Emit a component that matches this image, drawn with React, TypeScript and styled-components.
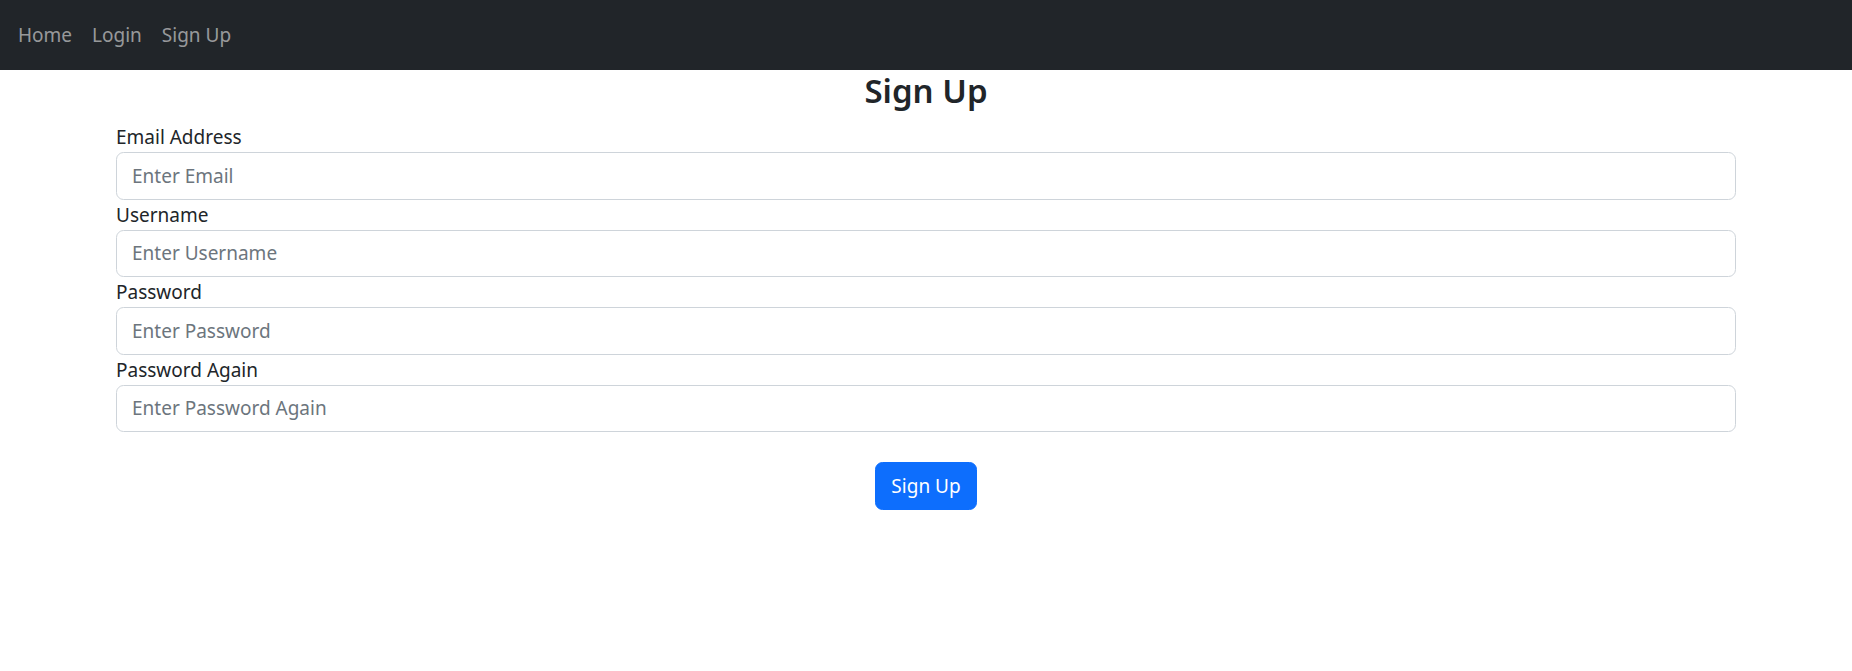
import styled, { createGlobalStyle } from 'styled-components';

const GlobalStyle = createGlobalStyle`
	* {
		box-sizing: border-box;
	}

	body {
		margin: 0;
		background: #ffffff;
		color: #212529;
		font-family: 'Noto Sans', 'Open Sans', sans-serif;
		font-size: 19px;
		line-height: 30px;
	}
`;

const fields = [
	{ label: 'Email Address', placeholder: 'Enter Email', type: 'email' },
	{ label: 'Username', placeholder: 'Enter Username', type: 'text' },
	{ label: 'Password', placeholder: 'Enter Password', type: 'password' },
	{ label: 'Password Again', placeholder: 'Enter Password Again', type: 'password' },
];

const App = () => {
	return (
		<>
			<GlobalStyle />
			<NavBar>
				<NavLink href="#">Home</NavLink>
				<NavLink href="#">Login</NavLink>
				<NavLink href="#">Sign Up</NavLink>
			</NavBar>
			<Container>
				<Title>Sign Up</Title>
				<form onSubmit={(e) => e.preventDefault()}>
					{fields.map((f) => (
						<FieldGroup key={f.label}>
							<Label>{f.label}</Label>
							<Input type={f.type} placeholder={f.placeholder} />
						</FieldGroup>
					))}
					<ButtonRow>
						<SubmitButton type="submit">Sign Up</SubmitButton>
					</ButtonRow>
				</form>
			</Container>
		</>
	);
};

export default App;

const NavBar = styled.nav`
	height: 70px;
	background-color: #212529;
	display: flex;
	align-items: center;
	padding: 0 8px;
`;

const NavLink = styled.a`
	padding: 10px;
	color: rgba(255, 255, 255, 0.55);
	text-decoration: none;
	font-size: 19px;
	line-height: 30px;
`;

const Container = styled.div`
	width: 100%;
	max-width: 1650px;
	margin: 0 auto;
	padding: 0 15px;
`;

const Title = styled.h3`
	margin: 0 0 10px;
	text-align: center;
	font-size: 33px;
	line-height: 42px;
	font-weight: 600;
`;

const FieldGroup = styled.div`
	display: flex;
	flex-direction: column;
`;

const Label = styled.label`
	font-size: 19px;
	line-height: 30px;
	color: #212529;
`;

const Input = styled.input`
	height: 47.5px;
	width: 100%;
	padding: 7.5px 15px;
	font-family: inherit;
	font-size: 19px;
	color: #212529;
	border: 1px solid #ced4da;
	border-radius: 7.5px;
	outline: none;

	&::placeholder {
		color: #6c757d;
	}
`;

const ButtonRow = styled.div`
	display: flex;
	justify-content: center;
	margin-top: 30px;
`;

const SubmitButton = styled.button`
	height: 47.5px;
	padding: 0 15px;
	background-color: #0d6efd;
	color: #ffffff;
	border: 1px solid #0d6efd;
	border-radius: 7.5px;
	font-family: inherit;
	font-size: 19px;
	cursor: pointer;
`;
